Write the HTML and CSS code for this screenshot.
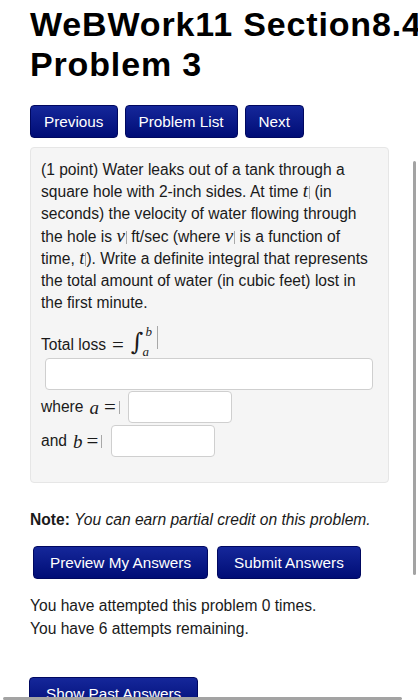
FILE: index.html
```html
<!DOCTYPE html>
<html>
<head>
<meta charset="utf-8">
<link rel="stylesheet" href="styles.css">
</head>
<body>
<div class="page">
  <h1 class="title">WeBWork11 Section8.4 Problem 3</h1>
  <div class="nav">
    <a class="btn">Previous</a>
    <a class="btn">Problem List</a>
    <a class="btn">Next</a>
  </div>
  <div class="problem">
    <p class="text">(1 point) Water leaks out of a tank through a square hole with 2-inch sides. At time <span class="mi">t</span><span class="bar"></span> (in seconds) the velocity of water flowing through the hole is <span class="mi">v</span><span class="bar"></span> ft/sec (where <span class="mi">v</span><span class="bar"></span> is a function of time, <span class="mi">t</span><span class="bar"></span>). Write a definite integral that represents the total amount of water (in cubic feet) lost in the first minute.</p>
    <div class="loss-row">
      <span>Total loss</span>
      <span class="eq">=</span>
      <span class="integral">
        <span class="int">∫</span>
        <span class="limits"><span class="lim-b">b</span><span class="lim-a">a</span></span>
        <span class="tallbar"></span>
      </span>
    </div>
    <input class="field field-wide" type="text">
    <div class="ans-row">
      <span>where</span><span class="mi mi-a">a</span><span class="eq">=</span><span class="bar"></span>
      <input class="field field-a" type="text">
    </div>
    <div class="ans-row">
      <span>and</span><span class="mi mi-b">b</span><span class="eq eq-b">=</span><span class="bar"></span>
      <input class="field field-b" type="text">
    </div>
  </div>
  <p class="note"><b>Note:</b> <i>You can earn partial credit on this problem.</i></p>
  <div class="actions">
    <a class="btn btn-wide">Preview My Answers</a>
    <a class="btn btn-wide">Submit Answers</a>
  </div>
  <p class="attempts">You have attempted this problem 0 times.<br>You have 6 attempts remaining.</p>
  <a class="btn btn-wide btn-past">Show Past Answers</a>
</div>
<div class="vscroll"></div>
<div class="hscroll"></div>
</body>
</html>
```

FILE: styles.css
```css
html, body {
  margin: 0;
  padding: 0;
  background: #fff;
  overflow: hidden;
  height: 700px;
}
body {
  font-family: "Liberation Sans", Arial, Helvetica, sans-serif;
  color: #1a1a1a;
}
.page {
  width: 440px;
  padding-left: 30px;
  box-sizing: border-box;
}
.title {
  font-size: 34px;
  letter-spacing: 0.85px;
  line-height: 40px;
  font-weight: bold;
  color: #000;
  margin: 4px 0 0 0;
}
.nav {
  display: flex;
  gap: 7px;
  margin-top: 21px;
}
.btn {
  display: inline-flex;
  align-items: center;
  justify-content: center;
  height: 33px;
  box-sizing: border-box;
  padding: 0 13px;
  font-size: 15.3px;
  color: #fff;
  background: linear-gradient(#15279a, #000d76);
  border: 1px solid #000860;
  border-radius: 4px;
  white-space: nowrap;
}
.problem {
  width: 359px;
  box-sizing: border-box;
  margin-top: 9px;
  padding: 11px 12px 25px 10px;
  background: #f5f5f5;
  border: 1px solid #e6e6e6;
  border-radius: 4px;
  font-size: 15.6px;
}
.text {
  margin: 0;
  line-height: 22.2px;
}
.mi {
  font-family: "Liberation Serif", "Times New Roman", serif;
  font-style: italic;
  font-size: 19px;
  line-height: 1;
}
.bar {
  display: inline-block;
  width: 1px;
  height: 13px;
  background: #a8a8a8;
  vertical-align: -2px;
  margin-left: 1px;
}
.loss-row {
  display: flex;
  align-items: center;
  height: 24px;
  margin-top: 19px;
}
.eq {
  font-family: "Liberation Serif", "Times New Roman", serif;
  font-size: 21px;
  margin: 0 7px 0 6px;
}
.integral {
  align-self: flex-end;
  display: flex;
  height: 30px;
  margin-top: -6px;
}
.int {
  font-family: "DejaVu Serif", "Liberation Serif", serif;
  font-style: italic;
  font-size: 24px;
  line-height: 30px;
}
.limits {
  display: flex;
  flex-direction: column;
  justify-content: space-between;
  font-family: "Liberation Serif", "Times New Roman", serif;
  font-style: italic;
  font-size: 13px;
  line-height: 10px;
}
.lim-b {
  margin-left: 2px;
}
.lim-a {
  margin-left: -1px;
}
.tallbar {
  width: 1px;
  height: 23px;
  background: #a8a8a8;
  margin-left: 5px;
  margin-top: -1px;
}
.field {
  display: block;
  box-sizing: border-box;
  height: 32px;
  background: #fff;
  border: 1px solid #cfcfcf;
  border-radius: 4px;
  padding: 0;
  margin: 0;
}
.field-wide {
  width: 328px;
  margin: 1px 0 0 4px;
}
.ans-row {
  display: flex;
  align-items: center;
  height: 32px;
  margin-top: 1px;
}
.ans-row + .ans-row {
  margin-top: 2px;
}
.mi-a {
  margin-left: 6px;
}
.mi-b {
  margin-left: 6px;
}
.ans-row .eq {
  margin: 0 2px 0 5px;
}
.ans-row .eq-b {
  margin: 0 2px 0 4px;
}
.field-a {
  width: 104px;
  margin-left: 8px;
}
.field-b {
  width: 104px;
  margin-left: 9px;
}
.note {
  margin: 26px 0 0 0;
  font-size: 15.6px;
  line-height: 22px;
}
.actions {
  display: flex;
  gap: 9px;
  margin: 15px 0 0 3px;
}
.btn-wide {
  padding: 0 16px;
}
.attempts {
  margin: 15px 0 0 0;
  font-size: 15.6px;
  line-height: 23px;
}
.btn-past {
  margin-top: 37px;
  margin-left: -1px;
}
.vscroll {
  position: fixed;
  left: 413px;
  top: 161px;
  width: 3px;
  height: 414px;
  background: #a3a3a3;
  border-radius: 2px;
}
.hscroll {
  position: fixed;
  left: 3px;
  top: 697px;
  width: 399px;
  height: 3px;
  background: #a3a3a3;
  border-radius: 2px;
}
```
